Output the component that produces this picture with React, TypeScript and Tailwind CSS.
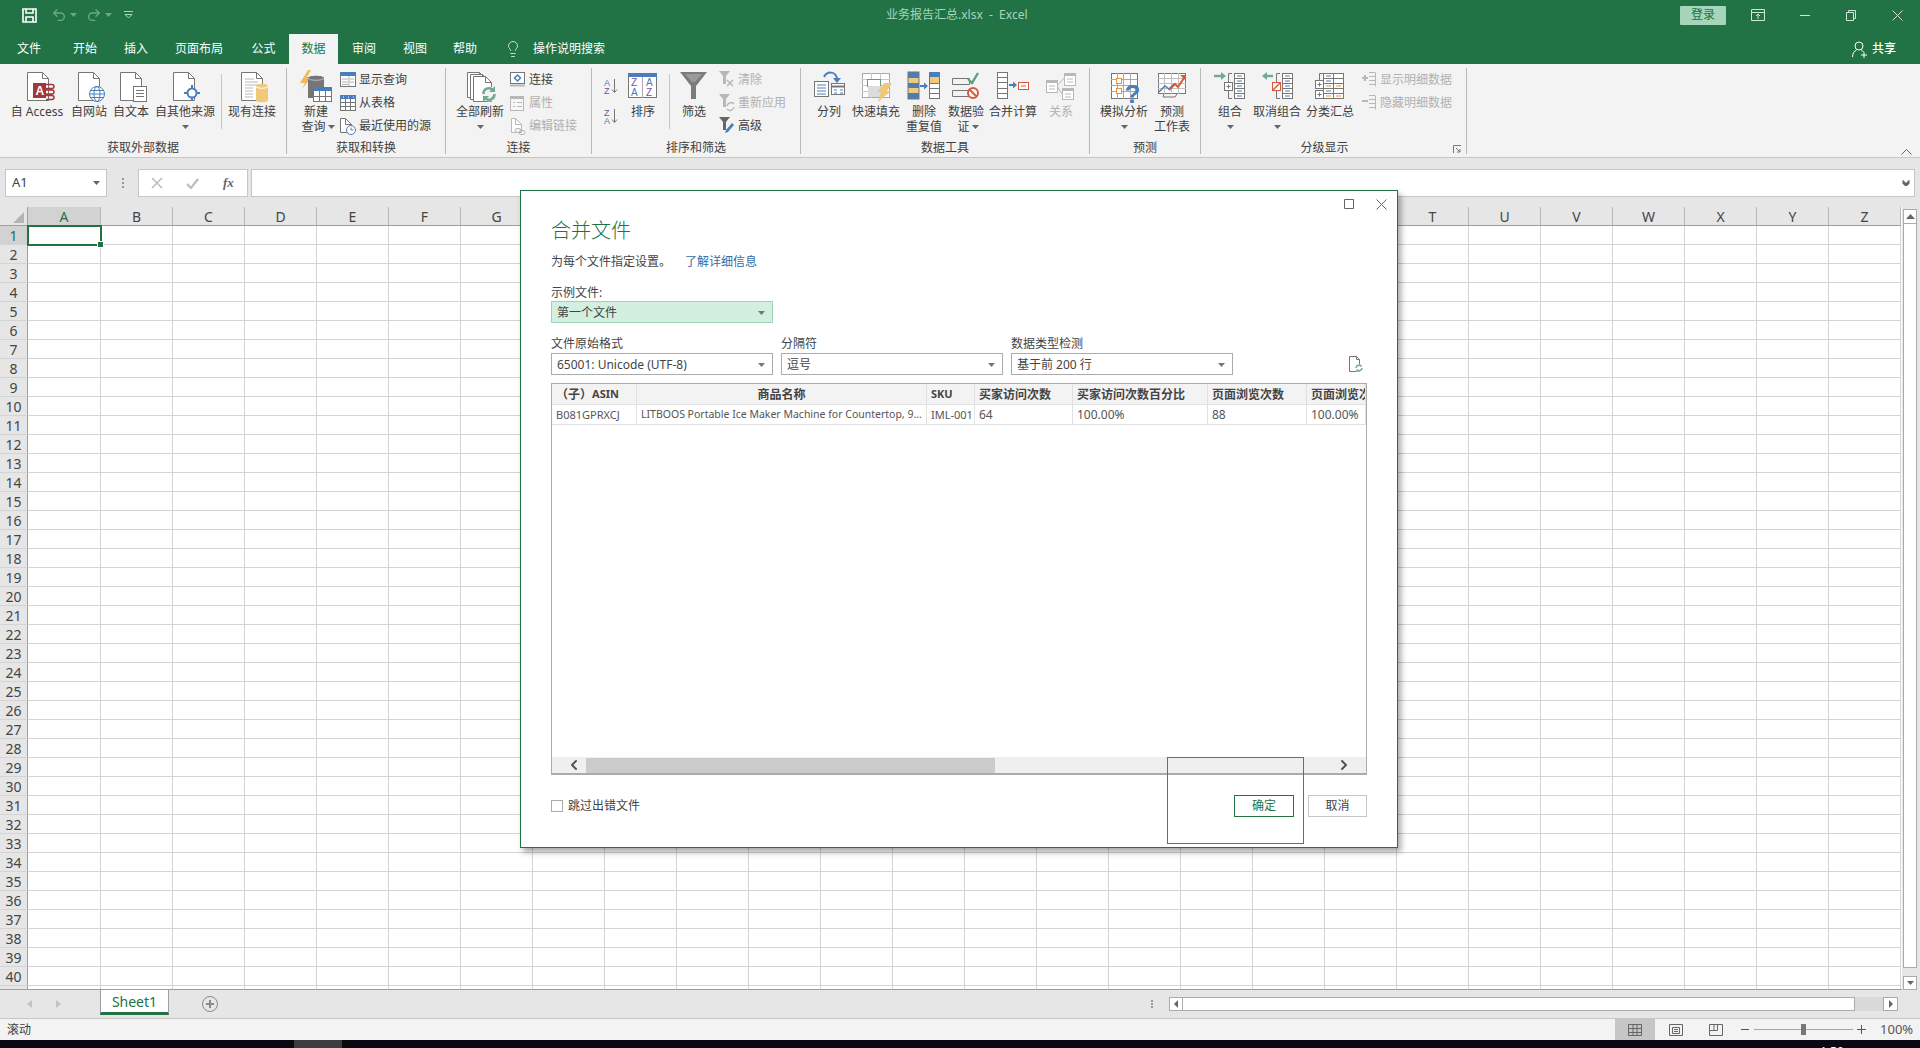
import React from "react";
import { Undo2, Redo2, Lightbulb, ChevronLeft, ChevronRight } from "lucide-react";

const G = "#767676";
const L = "#b8b8b8";
const B = "#4a7ebb";
const O = "#f2c879";
const GR = "#6fa98f";
const R = "#d9573c";
const P = "#7a4ea8";

function I({ s = 32, children }: { s?: number; children: React.ReactNode }) {
  return (
    <svg width={s} height={s} viewBox={`0 0 ${s} ${s}`} fill="none" strokeWidth={1} className="overflow-visible shrink-0">
      {children}
    </svg>
  );
}

function Page({ x, w = 20, h = 29, c = G, y = 0.5 }: { x: number; w?: number; h?: number; c?: string; y?: number }) {
  return (
    <>
      <path d={`M${x} ${y}H${x + w - 6}L${x + w} ${y + 6}V${y + h}H${x}Z`} stroke={c} fill="#fff" />
      <path d={`M${x + w - 6} ${y}V${y + 6}H${x + w}`} stroke={c} />
    </>
  );
}

const Access = () => (
  <I>
    <Page x={6.5} w={21} h={28} />
    <path d="M25 12.500h6a2 2 0 0 1 2 2v0a2 2 0 0 1-2 2h-6M25 18h6a2 2 0 0 1 2 2v0a2 2 0 0 1-2 2h-6M25 23.500h6a2 2 0 0 1 2 2v0a2 2 0 0 1-2 2h-6" stroke="#a4373a" strokeWidth={1.5} />
    <rect x={12} y={11} width={13} height={15} fill="#a4373a" />
    <text x={14.5} y={23} fontSize={12} fontWeight={700} fill="#fff" fontFamily="Liberation Sans">A</text>
  </I>
);
const Web = () => (
  <I>
    <Page x={5.5} w={21} h={28} />
    <circle cx={24} cy={22} r={7.5} fill="#fff" stroke={B} />
    <ellipse cx={24} cy={22} rx={3} ry={7.5} stroke={B} />
    <path d="M16.500 22h15M17.500 18.500h13M17.500 25.500h13" stroke={B} />
  </I>
);
const TextDoc = () => (
  <I>
    <Page x={5.5} w={21} h={28} />
    <rect x={18.5} y={14.5} width={13} height={15} fill="#fff" stroke={G} />
    <path d="M21 18.500h8M21 21.500h8M21 24.500h8" stroke={G} />
  </I>
);
const Other = () => (
  <I>
    <Page x={4.5} w={21} h={28} />
    <circle cx={23} cy={21} r={4.5} fill="#fff" stroke={B} strokeWidth={2} />
    <path d="M23 13v4M23 25v4M15 21h4M27 21h4" stroke={B} strokeWidth={2} />
  </I>
);
const Existing = () => (
  <I>
    <Page x={5.5} w={21} h={28} />
    <path d="M9 7h9M9 10h13M9 13h13M9 16h8M9 19h8M9 22h8M9 25h8" stroke={L} />
    <path d="M20 14c0-3 12-3 12 0v14c0 3-12 3-12 0Z" fill={O} />
    <path d="M20 14c0 3 12 3 12 0" stroke="#fff" />
  </I>
);
const NewQuery = () => (
  <I>
    <path d="M8-2L0 11h5L2 17l10-12H7l4-7Z" fill="#f0b95c" />
    <path d="M8 6c0-3 16-3 16 0v20H8Z" fill="#767676" />
    <path d="M8 6c0 3 16 3 16 0" stroke="#bdbdbd" />
    <rect x={13.5} y={15.5} width={18} height={14} fill="#fff" stroke={G} />
    <rect x={13} y={15} width={19} height={4} fill={B} />
    <path d="M19.500 19v11M25.500 19v11M13 24.500h18" stroke={G} />
  </I>
);
const SmallQuery = () => (
  <I s={16}>
    <rect x={0.5} y={0.5} width={15} height={14} fill="#fff" stroke={G} />
    <rect x={0} y={0} width={16} height={4} fill={B} />
    <path d="M10 7h4M10 10h4M2 7h6M2 10h6M2 12.500h6" stroke="#b0b0b0" />
    <path d="M9 4v10" stroke="#b0b0b0" />
  </I>
);
const SmallTable = () => (
  <I s={16}>
    <rect x={0.5} y={0.5} width={15} height={15} fill="#fff" stroke={G} />
    <rect x={0} y={0} width={16} height={4} fill={B} />
    <path d="M5.500 4v12M10.500 4v12M0 7.500h16M0 11.500h16" stroke={G} />
    <path d="M3 2h1M8 2h1M13 2h1" stroke="#fff" />
  </I>
);
const SmallRecent = () => (
  <I s={16}>
    <Page x={0.5} w={11} h={14} y={0.5} />
    <circle cx={11} cy={12} r={4.5} fill="#fff" stroke={B} />
    <path d="M11 9.500V12h2.500" stroke={G} />
  </I>
);
const RefreshAll = () => (
  <I>
    <Page x={3.5} w={18} h={25} />
    <Page x={6.5} w={18} h={25} y={2.5} />
    <Page x={9.5} w={18} h={25} y={4.5} />
    <circle cx={25} cy={22} r={7.5} fill="#f3f3f3" />
    <path d="M19.500 22a5.500 5.500 0 0 1 9.500-4M30.500 22a5.500 5.500 0 0 1-9.500 4" stroke={GR} strokeWidth={2.5} />
    <path d="M31 14v6h-6ZM19 30v-6h6Z" fill={GR} />
  </I>
);
const SmallConn = () => (
  <I s={16}>
    <rect x={0.5} y={0.5} width={14} height={11} fill="#fff" stroke={G} />
    <path d="M0 13.500h15" stroke={L} strokeWidth={2} />
    <path d="M7.500 3l3 3-3 3-3-3Z" stroke={B} fill="#fff" strokeWidth={1.5} />
  </I>
);
const SmallProp = () => (
  <I s={16}>
    <rect x={0.5} y={1.5} width={13} height={14} fill="#f7f7f7" stroke={L} />
    <rect x={0} y={1} width={14} height={3} fill={L} />
    <path d="M3 7.500h2M7 7.500h5M3 11.500h2M7 11.500h5" stroke={L} />
  </I>
);
const SmallChain = () => (
  <I s={16}>
    <Page x={1.5} w={10} h={14} y={0.5} c={L} />
    <rect x={5} y={10.5} width={6} height={4} rx={2} fill="#f3f3f3" stroke={L} />
    <rect x={9} y={12.5} width={6} height={4} rx={2} fill="none" stroke={L} />
  </I>
);
const Sort = ({ up }: { up: boolean }) => (
  <I s={16}>
    <text x={0} y={7} fontSize={9} fill={up ? B : P} fontFamily="Liberation Sans">{up ? "A" : "Z"}</text>
    <text x={0} y={14.5} fontSize={9} fill={up ? P : B} fontFamily="Liberation Sans">{up ? "Z" : "A"}</text>
    <path d="M10.500 0v13M8 10.500l2.500 3 2.500-3" stroke={G} />
  </I>
);
const SortBig = () => (
  <I>
    <rect x={1.5} y={1.5} width={28} height={24} stroke={G} fill="#fff" />
    <path d="M15.500 1v25" stroke="#a8a8a8" />
    <rect x={1} y={1} width={29} height={4} fill={B} />
    <text x={4} y={14} fontSize={10} fontWeight={500} fill={P} fontFamily="Liberation Sans">Z</text>
    <text x={4} y={24} fontSize={10} fontWeight={500} fill={B} fontFamily="Liberation Sans">A</text>
    <text x={19} y={14} fontSize={10} fontWeight={500} fill={B} fontFamily="Liberation Sans">A</text>
    <text x={19} y={24} fontSize={10} fontWeight={500} fill={P} fontFamily="Liberation Sans">Z</text>
  </I>
);
const Funnel = () => (
  <I>
    <path d="M2 0H29L18 14V27H13V14Z" fill="#7b7b7b" />
    <path d="M7 2H24L17 10H14Z" fill="#9a9a9a" />
  </I>
);
const SmallFunnel = ({ kind }: { kind: "x" | "r" | "p" }) => (
  <I s={16}>
    <path d="M0-1H11L7 4V12H4V4Z" fill={kind === "p" ? "#666" : L} />
    {kind === "x" && <path d="M8 8l6 6M14 8l-6 6" stroke={L} strokeWidth={1.5} />}
    {kind === "r" && <path d="M8 11a4 4 0 0 1 7-2M15 12a4 4 0 0 1-7 2" stroke={L} strokeWidth={1.5} />}
    {kind === "p" && <path d="M6 15l1-3 6-7 2 2-6 7Z" fill={B} />}
  </I>
);
const SplitCols = () => (
  <I>
    <rect x={1.5} y={9.5} width={14} height={15} fill="#fff" stroke={G} />
    <path d="M4 13h9M4 16h9M4 19h9M4 22h9" stroke={B} />
    <rect x={18.5} y={11.5} width={13} height={11} fill="#fff" stroke={G} />
    <path d="M18 14.500h14" stroke={G} strokeWidth={2} />
    <path d="M21 18h3M27 18h3M21 21h3M27 21h3" stroke={B} />
    <path d="M11 5c3-6 11-6 13 1" stroke={B} strokeWidth={2} />
    <path d="M20 6h8l-4 5Z" fill={B} />
  </I>
);
const Flash = () => (
  <I>
    <rect x={2.5} y={1.5} width={27} height={24} fill="#fff" stroke="#a9a9a9" />
    <path d="M2 7.500h28M2 13.500h28M2 19.500h28M11.500 1v25M20.500 1v25" stroke="#c8c8c8" />
    <rect x={7.5} y={7.5} width={13} height={7} fill="#fff" stroke="#5f9e80" />
    <rect x={8} y={14} width={13} height={11} fill="#dcdcdc" />
    <path d="M24 11h8l-5 8h4L18 30l3-10h-4Z" fill="#f0c87a" />
  </I>
);
const Dups = () => (
  <I>
    <rect x={0} y={0} width={11} height={27} fill={B} stroke={G} />
    <rect x={0.5} y={6} width={10} height={5} fill={O} />
    <rect x={0.5} y={16} width={10} height={5} fill={O} />
    <path d="M12 14h5" stroke={B} strokeWidth={2} />
    <path d="M16 10.500l4 3.500-4 3.500Z" fill={B} />
    <rect x={21.5} y={0.5} width={10} height={26} fill="#fff" stroke={G} />
    <rect x={21} y={0} width={11} height={5} fill={B} />
    <rect x={22} y={5} width={9} height={6} fill={O} />
    <path d="M21 11.500h11M21 16.500h11M21 21.500h11" stroke={G} />
  </I>
);
const Validate = () => (
  <I>
    <path d="M2.500 6.500h17v6h-17ZM2.500 18.500h17v6h-17Z" stroke={G} fill="#f3f3f3" />
    <path d="M18 7l4 4 6-10" stroke="#5f9e80" strokeWidth={2.4} />
    <circle cx={23} cy={21} r={5} fill="#fff" stroke={R} strokeWidth={2} />
    <path d="M19.500 17.500l7 7" stroke={R} strokeWidth={2} />
  </I>
);
const Consolidate = () => (
  <I>
    <rect x={0.5} y={0.5} width={10} height={26} fill="#fff" stroke={G} />
    <path d="M0 5.500h11M0 10.500h11M0 16.500h11M0 21.500h11" stroke={G} />
    <path d="M12 13h5" stroke={B} strokeWidth={2} />
    <path d="M16 9.500l4 3.500-4 3.500Z" fill={B} />
    <rect x={21.5} y={10.5} width={10} height={7} fill="#fff" stroke={R} />
    <path d="M24 14h5" stroke={R} />
  </I>
);
const Relation = () => (
  <I>
    <path d="M12 14L19 6M12 14l5 8" stroke={L} />
    <rect x={1.5} y={8.5} width={11} height={12} fill="#fff" stroke={L} />
    <rect x={1} y={8} width={12} height={3} fill={L} />
    <path d="M4 14h6M4 17h6" stroke={L} />
    <rect x={19.5} y={1.5} width={11} height={12} fill="#fff" stroke={L} />
    <rect x={19} y={1} width={12} height={3} fill={L} />
    <path d="M22 7h6M22 10h6" stroke={L} />
    <rect x={17.5} y={16.5} width={11} height={11} fill="#fff" stroke={L} />
    <rect x={17} y={16} width={12} height={3} fill={L} />
    <path d="M20 22h6M20 25h6" stroke={L} />
  </I>
);
const WhatIf = () => (
  <I>
    <rect x={3.5} y={1.5} width={26} height={25} fill="#fff" stroke={G} />
    <path d="M3 7.500h26M3 13.500h26M3 19.500h26M9.500 1v26M15.500 1v26M22.500 1v26" stroke="#a8a8a8" />
    <rect x={8.5} y={6.5} width={5} height={5} fill="#fff" stroke="#e8913a" />
    <rect x={8.5} y={16.5} width={5} height={5} fill="#fff" stroke="#e8913a" />
    <text x={16.5} y={31} fontSize={26} fontWeight={700} fill={B} fontFamily="Liberation Sans">?</text>
  </I>
);
const Forecast = () => (
  <I>
    <rect x={2.5} y={1.5} width={27} height={20} fill="#fff" stroke={G} />
    <path d="M2 6.500h28M2 11.500h28M2 16.500h28M8.500 1v21M15.500 1v21M22.500 1v21" stroke="#c0c0c0" />
    <path d="M3 20l6-6 4 3 5-5" stroke={B} strokeWidth={1.5} />
    <path d="M13 18l6-6 3 3 6-9" stroke={R} strokeWidth={2} />
    <path d="M24 3h6v6Z" fill={R} />
    <path d="M8 22l-1 3h12l2-3" stroke={G} />
  </I>
);
const GroupIcon = ({ un }: { un?: boolean }) => (
  <I>
    <g transform={un ? "translate(1 0)" : undefined}>
      <path d={un ? "M4 4h7" : "M0 4h8"} stroke={GR} strokeWidth={2.4} />
      <path d={un ? "M5 0L0 4l5 4Z" : "M7 0l5 4-5 4Z"} fill={GR} />
      <path d="M18 1.500H14.500V10M14.500 18V26.500H18" stroke={G} />
      <rect x={un ? 10.5 : 10.5} y={10.5} width={8} height={8} fill="#fff" stroke={un ? R : G} />
      {un ? <path d="M11 18l7-7" stroke={R} strokeWidth={1.5} /> : <path d="M12.500 14.500h4M14.500 12.500v4" stroke={G} />}
      <rect x={20.5} y={1.5} width={10} height={25} fill="#fff" stroke={G} />
      <path d="M20 6.500h11M20 11.500h11M20 16.500h11M20 21.500h11" stroke={G} />
      <path d="M23 4h5M23 9h5M23 14h5M23 19h5M23 24h5" stroke={B} />
    </g>
  </I>
);
const Subtotal = () => (
  <I>
    <rect x={9.5} y={1.5} width={20} height={25} fill="#fff" stroke={G} />
    <path d="M9 6.500h21M9 11.500h21M9 16.500h21M9 21.500h21M19.500 1v26" stroke={G} />
    <path d="M12 4h5M12 9h5M12 19h5" stroke={B} />
    <path d="M12 14h5M22 14h5M12 24h5M22 24h5" stroke="#e8913a" />
    <rect x={1.5} y={8.5} width={8} height={8} fill="#fff" stroke={G} />
    <path d="M3.500 12.500h4M5.500 10.500v4" stroke={G} />
    <rect x={1.5} y={18.5} width={8} height={8} fill="#fff" stroke={G} />
    <path d="M3.500 22.500h4M5.500 20.500v4" stroke={G} />
    <path d="M9 1.500H5.500V8" stroke={G} />
  </I>
);
const SmallDetail = ({ plus }: { plus: boolean }) => (
  <I s={16}>
    <path d="M1 6h6" stroke={L} strokeWidth={2} />
    {plus && <path d="M4 3v6" stroke={L} strokeWidth={2} />}
    <path d="M8 0.500h6M14.500 0.500v14M8 4.500h6M8 8.500h6M8 12.500h6" stroke={L} />
  </I>
);

const Caret = ({ c = "#666" }: { c?: string }) => (
  <svg width={7} height={4} viewBox="0 0 7 4" className="shrink-0">
    <path d="M0 0h7L3.500 4Z" fill={c} />
  </svg>
);

function Big({
  w,
  icon,
  l1,
  l2,
  caret,
  off,
}: {
  w: string;
  icon: React.ReactNode;
  l1: string;
  l2?: React.ReactNode;
  caret?: boolean;
  off?: boolean;
}) {
  return (
    <div className={`${w} shrink-0 flex flex-col items-center whitespace-nowrap ${off ? "text-[#b1b1b1]" : ""}`}>
      <div className="h-[32px] w-[32px]">{icon}</div>
      <div className="h-[15px] leading-[15px]">{l1}</div>
      {l2 && <div className="h-[15px] leading-[15px]">{l2}</div>}
      {caret && (
        <div className="h-[15px] flex items-center">
          <Caret />
        </div>
      )}
    </div>
  );
}

function Small({ icon, t, off }: { icon: React.ReactNode; t: string; off?: boolean }) {
  return (
    <div className={`h-[23px] shrink-0 flex items-center gap-[3px] whitespace-nowrap ${off ? "text-[#b1b1b1]" : ""}`}>
      <div className="w-[16px] h-[16px]">{icon}</div>
      <span>{t}</span>
    </div>
  );
}

function Group({ w, label, pr, children }: { w: string; label: string; pr?: string; children: React.ReactNode }) {
  return (
    <div className={`${w} shrink-0 h-[86px] flex flex-col border-r border-[#b9b9b9] relative`}>
      <div className="h-[72px] shrink-0 pt-[4px] flex">{children}</div>
      <div className={`h-[14px] shrink-0 leading-[15px] text-center ${pr ?? ""}`}>{label}</div>
    </div>
  );
}

const columns = "ABCDEFGHIJKLMNOPQRSTUVWXYZ".split("");
const rows = Array.from({ length: 41 }, (_, i) => i + 1);
const tabs: [string, string][] = [
  ["文件", "w-[58px]"],
  ["开始", "w-[54px]"],
  ["插入", "w-[48px]"],
  ["页面布局", "w-[78px]"],
  ["公式", "w-[51px]"],
];
const tabs2: [string, string][] = [
  ["审阅", "w-[52px]"],
  ["视图", "w-[50px]"],
  ["帮助", "w-[50px]"],
];

const thCls = "h-[20px] border-r border-[#e1e1e1] flex items-center pt-px px-[4px] font-bold text-[#444] whitespace-nowrap overflow-hidden";
const tdCls = "h-[20px] border-r border-b border-[#e1e1e1] flex items-center pt-px pl-[4px] text-[#555] whitespace-nowrap overflow-hidden";

function Sel({ t, w = "w-[222px]", green }: { t: string; w?: string; green?: boolean }) {
  return (
    <div
      className={`${w} h-[22px] border flex items-center justify-between pt-px pl-[5px] pr-[7px] ${
        green ? "bg-[#d3efdf] border-[#9fd5b7]" : "bg-white border-[#ababab]"
      } text-[#444]`}
    >
      <span className="whitespace-nowrap">{t}</span>
      <Caret c="#777" />
    </div>
  );
}

export default function App() {
  return (
    <div className="w-[1920px] h-[1048px] overflow-hidden flex flex-col relative bg-white text-[12px] text-[#3f3f3f] font-['Noto_Sans','Noto_Sans_CJK_SC',sans-serif]">
      {/* title bar */}
      <div className="h-[34px] shrink-0 bg-[#217346] flex items-center pb-[4px] relative">
        <div className="w-[886px] shrink-0 flex items-center pl-[22px]">
          <svg width={15} height={15} viewBox="0 0 15 15" fill="none" stroke="#fff" strokeWidth={1.6}>
            <path d="M1 1h13v13H1Z" />
            <path d="M4 1v4h7V1M4 14V9h7v5" />
          </svg>
          <Undo2 size={16} strokeWidth={2} color="#6aa888" className="ml-[14px]" />
          <span className="ml-[3px]"><Caret c="#6aa888" /></span>
          <Redo2 size={16} strokeWidth={2} color="#6aa888" className="ml-[9px]" />
          <span className="ml-[3px]"><Caret c="#6aa888" /></span>
          <svg width={9} height={8} viewBox="0 0 9 8" className="ml-[12px]" fill="none" stroke="#a9d3bb">
            <path d="M0 .5h9M1 3.500h7L4.500 7Z" />
          </svg>
        </div>
        <div className="text-[#a9d3bb] whitespace-pre">业务报告汇总.xlsx  -  Excel</div>
        <div className="ml-auto flex items-center h-[19px] mr-[17px]">
          <div className="w-[46px] h-[19px] bg-[#a5d5ba] rounded-[1px] text-[#217346] flex items-center justify-center">登录</div>
          <svg width={14} height={12} viewBox="0 0 14 12" className="ml-[25px]" fill="none" stroke="#cfe5d8">
            <path d="M.5.5h13v11H.5ZM.5 3.500h13M7 10V5M5 7l2-2 2 2" />
          </svg>
          <div className="w-[10px] h-px bg-[#cfe5d8] ml-[35px]" />
          <svg width={10} height={11} viewBox="0 0 10 11" className="ml-[36px]" fill="none" stroke="#cfe5d8">
            <path d="M.5 2.500h7v8h-7ZM2.500 2.500v-2h7v8h-2" />
          </svg>
          <svg width={11} height={11} viewBox="0 0 11 11" className="ml-[36px]" stroke="#cfe5d8">
            <path d="M.5.5l10 10M10.500.5l-10 10" />
          </svg>
        </div>
      </div>
      {/* tabs */}
      <div className="h-[30px] shrink-0 bg-[#217346] flex text-white items-stretch">
        {tabs.map(([t, w]) => (
          <div key={t} className={`${w} flex items-center justify-center`}>{t}</div>
        ))}
        <div className="w-[49px] bg-[#f3f3f3] text-[#217346] flex items-center justify-center">数据</div>
        {tabs2.map(([t, w]) => (
          <div key={t} className={`${w} flex items-center justify-center`}>{t}</div>
        ))}
        <div className="w-[14px]" />
        <div className="flex items-center w-[19px]">
          <Lightbulb size={18} strokeWidth={1} color="#fff" />
        </div>
        <div className="flex items-center ml-[10px]">操作说明搜索</div>
        <div className="ml-auto flex items-center gap-[4px] mr-[24px]">
          <svg width={16} height={17} viewBox="0 0 16 17" fill="none" stroke="#fff">
            <circle cx={7} cy={5} r={4} />
            <path d="M.5 16c0-4 2-6 4-7M9 9c1 .5 2 1 2.500 2M12 11v6M9 14h6" />
          </svg>
          <span className="font-medium">共享</span>
        </div>
      </div>
      {/* ribbon */}
      <div className="h-[94px] shrink-0 bg-[#f3f3f3] border-b border-[#c6c6c6] pt-[4px] flex relative">
        <Group w="w-[287px]" label="获取外部数据">
          <div className="w-[9px] shrink-0" />
          <Big w="w-[56px]" icon={<Access />} l1="自 Access" />
          <Big w="w-[48px]" icon={<Web />} l1="自网站" />
          <Big w="w-[36px]" icon={<TextDoc />} l1="自文本" />
          <Big w="w-[72px]" icon={<Other />} l1="自其他来源" caret />
          <div className="w-px h-[55px] mt-[2px] bg-[#c6c6c6] shrink-0" />
          <Big w="w-[60px]" icon={<Existing />} l1="现有连接" />
        </Group>
        <Group w="w-[159px]" label="获取和转换">
          <div className="w-[5px] shrink-0" />
          <Big
            w="w-[48px]"
            icon={<NewQuery />}
            l1="新建"
            l2={
              <span className="flex items-center gap-[2px] ml-[4px]">
                查询
                <Caret />
              </span>
            }
          />
          <div className="flex flex-col -mt-[4px]">
            <Small icon={<SmallQuery />} t="显示查询" />
            <Small icon={<SmallTable />} t="从表格" />
            <Small icon={<SmallRecent />} t="最近使用的源" />
          </div>
        </Group>
        <Group w="w-[146px]" label="连接">
          <div className="w-[10px] shrink-0" />
          <Big w="w-[48px]" icon={<RefreshAll />} l1="全部刷新" caret />
          <div className="flex flex-col ml-[6px] -mt-[4px]">
            <Small icon={<SmallConn />} t="连接" />
            <Small icon={<SmallProp />} t="属性" off />
            <Small icon={<SmallChain />} t="编辑链接" off />
          </div>
        </Group>
        <Group w="w-[209px]" label="排序和筛选">
          <div className="w-[12px] shrink-0" />
          <div className="w-[19px] shrink-0 flex flex-col gap-[14px] pt-[7px]">
            <Sort up />
            <Sort up={false} />
          </div>
          <Big w="w-[40px]" icon={<SortBig />} l1="排序" />
          <div className="w-px h-[55px] ml-[6px] mt-[2px] bg-[#c6c6c6] shrink-0" />
          <Big w="w-[48px]" icon={<Funnel />} l1="筛选" />
          <div className="flex flex-col ml-px -mt-[4px]">
            <Small icon={<SmallFunnel kind="x" />} t="清除" off />
            <Small icon={<SmallFunnel kind="r" />} t="重新应用" off />
            <Small icon={<SmallFunnel kind="p" />} t="高级" />
          </div>
        </Group>
        <Group w="w-[289px]" label="数据工具">
          <div className="w-[10px] shrink-0" />
          <Big w="w-[36px]" icon={<SplitCols />} l1="分列" />
          <div className="w-[3px] shrink-0" />
          <Big w="w-[52px]" icon={<Flash />} l1="快速填充" />
          <div className="w-[4px] shrink-0" />
          <Big w="w-[36px]" icon={<Dups />} l1="删除" l2="重复值" />
          <Big
            w="w-[48px]"
            icon={<Validate />}
            l1="数据验"
            l2={
              <span className="flex items-center gap-[2px] ml-[4px]">
                证
                <Caret />
              </span>
            }
          />
          <Big w="w-[46px]" icon={<Consolidate />} l1="合并计算" />
          <div className="w-[7px] shrink-0" />
          <Big w="w-[36px]" icon={<Relation />} l1="关系" off />
        </Group>
        <Group w="w-[111px]" label="预测">
          <div className="w-[10px] shrink-0" />
          <Big w="w-[48px]" icon={<WhatIf />} l1="模拟分析" caret />
          <Big w="w-[48px]" icon={<Forecast />} l1="预测" l2="工作表" />
        </Group>
        <Group w="w-[266px]" label="分级显示" pr="pr-[18px]">
          <div className="w-[11px] shrink-0" />
          <Big w="w-[36px]" icon={<GroupIcon />} l1="组合" caret />
          <div className="w-[5px] shrink-0" />
          <Big w="w-[48px]" icon={<GroupIcon un />} l1="取消组合" caret />
          <div className="w-[5px] shrink-0" />
          <Big w="w-[48px]" icon={<Subtotal />} l1="分类汇总" />
          <div className="flex flex-col ml-[7px] -mt-[4px]">
            <Small icon={<SmallDetail plus />} t="显示明细数据" off />
            <Small icon={<SmallDetail plus={false} />} t="隐藏明细数据" off />
          </div>
          <svg width={8} height={8} viewBox="0 0 8 8" className="absolute right-[5px] bottom-[1px]" fill="none" stroke="#777">
            <path d="M.5 8V.5H8M3 3l4 4M7 4v3H4" />
          </svg>
        </Group>
        <svg width={11} height={6} viewBox="0 0 11 6" className="absolute right-[8px] bottom-[2px]" fill="none" stroke="#666">
          <path d="M.5 5.500l5-5 5 5" />
        </svg>
      </div>
      {/* formula bar */}
      <div className="h-[49px] shrink-0 bg-[#e6e6e6] flex pt-[11px] pl-[5px] pr-[5px]">
        <div className="w-[102px] h-[28px] bg-white border border-[#c6c6c6] flex items-center justify-between pl-[6px] pr-[6px] text-[13px] text-[#444]">
          A1
          <Caret />
        </div>
        <div className="w-[31px] h-[28px] flex flex-col items-center justify-center gap-[2px] shrink-0">
          <div className="w-[2px] h-[2px] bg-[#9a9a9a]" />
          <div className="w-[2px] h-[2px] bg-[#9a9a9a]" />
          <div className="w-[2px] h-[2px] bg-[#9a9a9a]" />
        </div>
        <div className="w-[110px] h-[28px] bg-white border border-[#c6c6c6] flex items-center shrink-0">
          <svg width={12} height={12} viewBox="0 0 12 12" className="ml-[12px]" stroke="#bdbdbd" strokeWidth={1.6}>
            <path d="M1 1l10 10M11 1L1 11" />
          </svg>
          <svg width={13} height={11} viewBox="0 0 13 11" className="ml-[23px]" fill="none" stroke="#bdbdbd" strokeWidth={2.2}>
            <path d="M1 6l4 4 7-9" />
          </svg>
          <span className="ml-[24px] italic font-bold text-[#666] text-[13px] font-['Liberation_Serif',serif]">fx</span>
        </div>
        <div className="w-[3px] shrink-0" />
        <div className="flex-1 h-[28px] bg-white border border-[#c6c6c6] flex items-center justify-end pr-[4px]">
          <svg width={8} height={6} viewBox="0 0 8 6" fill="none" stroke="#666" strokeWidth={1.5}>
            <path d="M.5.5l3.500 3.500L7.500.5M.5 2.500l3.500 3.500 3.500-3.500" />
          </svg>
        </div>
      </div>
      {/* sheet */}
      <div className="h-[783px] shrink-0 flex relative overflow-hidden">
        <div className="w-[1902px] shrink-0 grid grid-cols-[28px_73px_repeat(25,72px)] auto-rows-[19px] content-start bg-white overflow-hidden border-b border-[#9e9e9e]">
          <div className="h-[19px] bg-[#e6e6e6] border-b border-r border-[#9e9e9e] flex items-end justify-end p-[2px] pr-[3px]">
            <div className="w-0 h-0 border-l-[11px] border-l-transparent border-b-[11px] border-b-[#b4b4b4]" />
          </div>
          {columns.map((c, i) => (
            <div
              key={c}
              className={`h-[19px] border-b border-r border-b-[#9e9e9e] border-r-[#b8b8b8] flex items-center justify-center text-[14px] ${
                i === 0 ? "bg-[#d2d2d2] text-[#217346]" : "bg-[#e6e6e6] text-[#444]"
              }`}
            >
              {c}
            </div>
          ))}
          {rows.map((r) => (
            <React.Fragment key={r}>
              <div
                className={`h-[19px] pt-px border-b border-r border-b-[#d4d4d4] border-r-[#9e9e9e] flex items-center justify-center text-[14px] ${
                  r === 1 ? "bg-[#d2d2d2] text-[#217346]" : "bg-[#e6e6e6] text-[#444]"
                }`}
              >
                {r}
              </div>
              {columns.map((c) => (
                <div key={c} className="h-[19px] border-b border-r border-[#d4d4d4]" />
              ))}
            </React.Fragment>
          ))}
        </div>
        {/* vertical scrollbar */}
        <div className="flex-1 bg-[#e6e6e6] flex flex-col pl-[1px] pr-[3px]">
          <div className="h-[2px] shrink-0" />
          <div className="h-[15px] shrink-0 bg-white border border-[#ababab] flex items-center justify-center">
            <svg width={9} height={5} viewBox="0 0 9 5"><path d="M4.500 0L9 5H0Z" fill="#666" /></svg>
          </div>
          <div className="flex-1 bg-white border-x border-b border-[#ababab] mb-[8px]" />
          <div className="h-[14px] shrink-0 bg-white border border-[#ababab] flex items-center justify-center">
            <Caret />
          </div>
        </div>
        {/* selection */}
        <div className="absolute left-[27px] top-[18px] w-[75px] h-[21px] border-2 border-[#217346]">
          <div className="absolute right-[-3px] bottom-[-3px] w-[5px] h-[5px] bg-[#217346] outline outline-1 outline-white" />
        </div>
      </div>
      {/* sheet tabs */}
      <div className="h-[28px] shrink-0 bg-[#e6e6e6] flex relative">
        <div className="w-[100px] shrink-0 flex items-center">
          <svg width={5} height={8} viewBox="0 0 5 8" className="ml-[27px]"><path d="M5 0v8L0 4Z" fill="#c4c4c4" /></svg>
          <svg width={5} height={8} viewBox="0 0 5 8" className="ml-[24px]"><path d="M0 0v8l5-4Z" fill="#c4c4c4" /></svg>
        </div>
        <div className="w-[69px] h-[25px] pt-[1px] bg-white border-x border-[#9e9e9e] border-b-[3px] border-b-[#217346] flex items-center justify-center text-[14px] text-[#217346]">
          Sheet1
        </div>
        <div className="ml-[33px] h-[28px] flex items-center">
          <svg width={16} height={16} viewBox="0 0 16 16" fill="none" stroke="#8a8a8a" strokeWidth={1}>
            <circle cx={8} cy={8} r={7.500} />
            <path d="M4 8h8M8 4v8" strokeWidth={2} />
          </svg>
        </div>
        <div className="ml-[933px] flex flex-col items-center justify-center gap-[1px]">
          <div className="w-[2px] h-[2px] bg-[#9a9a9a]" />
          <div className="w-[2px] h-[2px] bg-[#9a9a9a]" />
          <div className="w-[2px] h-[2px] bg-[#9a9a9a]" />
        </div>
        <div className="ml-[16px] mt-[7px] h-[14px] w-[729px] flex">
          <div className="w-[14px] bg-white border border-[#ababab] flex items-center justify-center">
            <svg width={4} height={8} viewBox="0 0 4 8"><path d="M4 0v8L0 4Z" fill="#666" /></svg>
          </div>
          <div className="flex-1 bg-white border-y border-r border-[#ababab]" />
          <div className="w-[28px] bg-[#d9d9d9]" />
          <div className="w-[15px] bg-white border border-[#ababab] flex items-center justify-center">
            <svg width={4} height={8} viewBox="0 0 4 8"><path d="M0 0v8l4-4Z" fill="#666" /></svg>
          </div>
        </div>
      </div>
      {/* status bar */}
      <div className="h-[22px] shrink-0 bg-[#f3f3f3] border-t border-[#c6c6c6] flex items-center pl-[7px]">
        <span>滚动</span>
        <div className="ml-[1584px] w-[40px] h-[21px] bg-[#c6c6c6] flex items-center justify-center">
          <svg width={14} height={12} viewBox="0 0 14 12" fill="none" stroke="#666">
            <path d="M.5.5h13v11H.5ZM.5 4.500h13M.5 8.500h13M5 .5v11M9 .5v11" />
          </svg>
        </div>
        <div className="w-[40px] flex justify-center ml-[1px]">
          <svg width={14} height={12} viewBox="0 0 14 12" fill="none" stroke="#666">
            <path d="M.5.5h13v11H.5ZM3.500 3.500h7v6h-7ZM5 5.500h4M5 7.500h4" />
          </svg>
        </div>
        <div className="w-[40px] flex justify-center">
          <svg width={14} height={12} viewBox="0 0 14 12" fill="none" stroke="#666">
            <path d="M.5.5h13v11H.5ZM.5 6.500h8V.5M5 .5v6" />
          </svg>
        </div>
        <div className="w-[8px] h-px bg-[#555] ml-[5px]" />
        <div className="ml-[5px] w-[99px] h-px bg-[#a6a6a6] flex items-center">
          <div className="w-[5px] h-[11px] bg-[#777] ml-[47px]" />
        </div>
        <svg width={9} height={9} viewBox="0 0 9 9" className="ml-[4px]" stroke="#555">
          <path d="M0 4.500h9M4.500 0v9" />
        </svg>
        <span className="ml-[14px] text-[13px] text-[#555]">100%</span>
      </div>
      {/* task bar */}
      <div className="h-[8px] shrink-0 bg-[#070a10] flex overflow-hidden relative">
        <div className="ml-[294px] w-[48px] h-full bg-[#3a3c40]" />
        <div className="ml-[1478px] pt-[5px] text-white text-[12px] leading-[14px]">1:50</div>
      </div>

      {/* dialog */}
      <div className="absolute left-[520px] top-[190px] w-[878px] h-[658px] bg-white border border-[#217346] shadow-[3px_4px_6px_rgba(0,0,0,0.35)] px-[30px] flex flex-col text-[#444]">
        <svg width={10} height={10} viewBox="0 0 10 10" className="absolute left-[823px] top-[8px]" fill="none" stroke="#666">
          <path d="M.5.5h9v9h-9Z" />
        </svg>
        <svg width={11} height={11} viewBox="0 0 11 11" className="absolute left-[855px] top-[8px]" stroke="#666">
          <path d="M.5.5l10 10M10.500.5l-10 10" />
        </svg>
        <div className="mt-[26px] h-[28px] leading-[28px] text-[20px] font-light text-[#217346]">合并文件</div>
        <div className="mt-[9px] h-[16px] leading-[16px] flex">
          <span>为每个文件指定设置。</span>
          <span className="ml-[14px] text-[#2e6da4]">了解详细信息</span>
        </div>
        <div className="mt-[14px] h-[16px] leading-[16px] pt-px">示例文件:</div>
        <div className="mt-px">
          <Sel t="第一个文件" green />
        </div>
        <div className="mt-[13px] flex gap-[8px]">
          <div className="w-[222px]">
            <div className="h-[16px] leading-[16px] mb-px">文件原始格式</div>
            <Sel t="65001: Unicode (UTF-8)" />
          </div>
          <div className="w-[222px]">
            <div className="h-[16px] leading-[16px] mb-px">分隔符</div>
            <Sel t="逗号" />
          </div>
          <div className="w-[222px]">
            <div className="h-[16px] leading-[16px] mb-px">数据类型检测</div>
            <Sel t="基于前 200 行" />
          </div>
          <div className="ml-auto mr-[4px] mt-[20px]">
            <svg width={14} height={16} viewBox="0 0 14 16" fill="none" className="overflow-visible">
              <path d="M.5.5h7l3 3V15.500H.5ZM7.500.5v3h3" stroke="#777" />
              <circle cx={10} cy={12} r={4} fill="#fff" />
              <path d="M7 12a3 3 0 0 1 5.500-1.500M13 12a3 3 0 0 1-5.500 1.500" stroke={GR} strokeWidth={1.5} />
            </svg>
          </div>
        </div>
        <div className="mt-[8px] h-[392px] w-[816px] shrink-0 border border-[#ababab] border-b-2 flex flex-col overflow-hidden">
          <div className="grid grid-cols-[85px_290px_48px_98px_135px_99px_59px] bg-[#f3f3f3] border-b border-[#e1e1e1]">
            <div className={thCls}>
              （子）<span className="text-[11px]">ASIN</span>
            </div>
            <div className={`${thCls} justify-center`}>商品名称</div>
            <div className={thCls}>
              <span className="text-[11px]">SKU</span>
            </div>
            <div className={thCls}>买家访问次数</div>
            <div className={thCls}>买家访问次数百分比</div>
            <div className={thCls}>页面浏览次数</div>
            <div className={thCls}>页面浏览次数</div>
          </div>
          <div className="grid grid-cols-[85px_290px_48px_98px_135px_99px_59px] text-[11px] font-['Noto_Sans',sans-serif]">
            <div className={tdCls}>B081GPRXCJ</div>
            <div className={`${tdCls} text-[10.5px]`}>LITBOOS Portable Ice Maker Machine for Countertop, 9...</div>
            <div className={tdCls}>IML-001</div>
            <div className={`${tdCls} text-[12px]`}>64</div>
            <div className={`${tdCls} text-[12px]`}>100.00%</div>
            <div className={`${tdCls} text-[12px]`}>88</div>
            <div className={`${tdCls} text-[12px]`}>100.00%</div>
          </div>
          <div className="flex-1" />
          <div className="h-[16px] bg-[#efefef] flex items-center shrink-0">
            <div className="w-[34px] flex justify-end pr-[4px]">
              <ChevronLeft size={16} strokeWidth={3} color="#555" />
            </div>
            <div className="w-[409px] h-[15px] bg-[#cbcbcb]" />
            <div className="flex-1 flex justify-end pr-[14px]">
              <ChevronRight size={16} strokeWidth={3} color="#555" />
            </div>
          </div>
        </div>
        <div className="mt-[20px] w-[816px] flex items-center justify-between">
          <div className="flex items-center gap-[5px]">
            <div className="w-[12px] h-[12px] border border-[#ababab]" />
            <span>跳过出错文件</span>
          </div>
          <div className="flex gap-[14px]">
            <div className="w-[60px] h-[22px] border border-[#217346] text-[#217346] flex items-center justify-center">确定</div>
            <div className="w-[59px] h-[22px] border border-[#c6c6c6] flex items-center justify-center">取消</div>
          </div>
        </div>
      </div>
      {/* annotation */}
      <div className="absolute left-[1167px] top-[757px] w-[137px] h-[87px] border border-[#e53935]" />
    </div>
  );
}
